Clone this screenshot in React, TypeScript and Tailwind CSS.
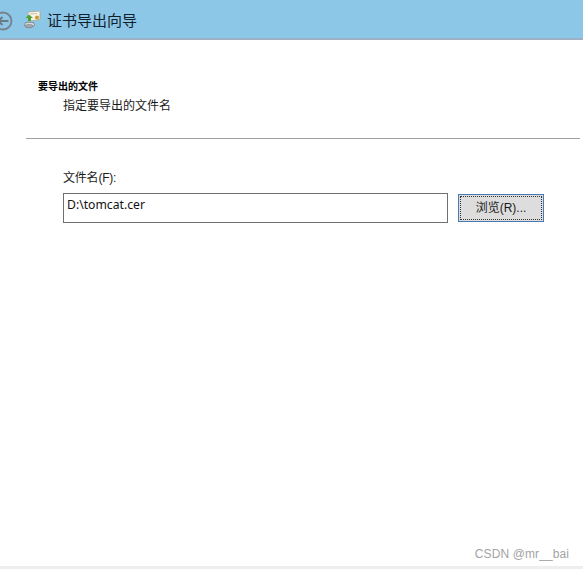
// 证书导出向导：选择要导出的文件名
const cjk = 'font-["Liberation_Sans","Noto_Sans_CJK_SC",sans-serif]'

function BackIcon() {
  return (
    <svg width="20" height="20" viewBox="0 0 20 20" fill="none" className="shrink-0">
      <circle cx="10" cy="10" r="8.5" stroke="#75828c" strokeWidth="1.8" />
      <path d="M15.5 10H5.5M9.5 6 5.5 10l4 4" stroke="#6d7a84" strokeWidth="2" />
    </svg>
  )
}

function CertIcon() {
  return (
    <svg width="17" height="18" viewBox="0 0 17 18" fill="none" className="shrink-0">
      <path d="M4 1 16 0V8.5L7 10 4 7.5Z" fill="#f6f3e6" stroke="#a9a48c" strokeWidth="0.8" />
      <circle cx="13" cy="6.5" r="2" fill="#c99a2e" />
      <path d="M6 3 13 2.5" stroke="#b9b5a3" strokeWidth="0.8" />
      <path d="M5 3.5 9 7H7v3H4V7H1.5Z" fill="#4d9e35" />
      <ellipse cx="5.5" cy="13.5" rx="5" ry="2.3" fill="#d6dade" stroke="#6d7378" strokeWidth="0.8" />
      <ellipse cx="5" cy="15.2" rx="4.2" ry="1.6" fill="#a5abb0" stroke="#6d7378" strokeWidth="0.6" />
    </svg>
  )
}

export default function App() {
  return (
    <div className={`relative flex h-[569px] w-[583px] flex-col overflow-hidden bg-white ${cjk}`}>
      <div className="flex h-[40px] shrink-0 items-center border-b-2 border-[#9db0c6] bg-[#8dc7e8] pt-[3px]">
        <div className="-ml-[7px]">
          <BackIcon />
        </div>
        <div className="ml-[11px] -mt-[2px]">
          <CertIcon />
        </div>
        <span className="ml-[6px] text-[15px] leading-[20px] text-[#10202c]">证书导出向导</span>
      </div>

      <div className="ml-[38px] mt-[40px] text-[10px] leading-[14px] font-bold text-black">要导出的文件</div>
      <div className="ml-[63px] mt-[4px] text-[12px] leading-[16px] text-[#1a1a1a]">指定要导出的文件名</div>

      <div className="ml-[26px] mr-[3px] mt-[24px] h-px bg-[#a0a0a0]" />

      <div className="ml-[63px] mt-[31px] text-[12px] leading-[16px] tracking-[-0.2px] text-[#1a1a1a]">文件名(F):</div>

      <div className="ml-[63px] mt-[7px] flex items-center">
        <div className='h-[30px] w-[385px] border border-[#707070] px-[3px] pt-[2px] font-["Noto_Sans","Noto_Sans_CJK_SC",sans-serif] text-[12.2px] leading-[18px] text-[#111]'>
          D:\tomcat.cer
        </div>
        <button
          type="button"
          className="ml-[10px] h-[28px] w-[86px] border border-[#4a7ab5] bg-[#dddddd] p-px text-[12px] leading-[16px] text-[#1a1a1a]"
        >
          <span className="flex h-full w-full items-center justify-center border border-dotted border-[#333333]">
            浏览(R)...
          </span>
        </button>
      </div>

      <div className="absolute bottom-[7px] right-[14px] text-[12px] leading-[16px] tracking-[0.1px] text-[#a3a3a3]">CSDN @mr__bai</div>
      <div className="absolute inset-x-0 bottom-0 h-[3px] bg-[#eeeeee]" />
    </div>
  )
}
